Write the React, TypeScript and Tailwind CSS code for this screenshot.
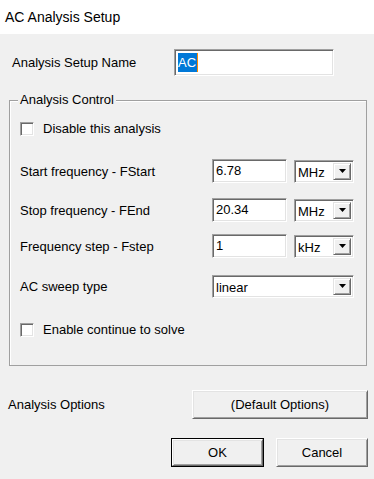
const font = { fontFamily: '"Liberation Sans", Arial, sans-serif' };

function Sunken({ className = "", children }: { className?: string; children?: React.ReactNode }) {
  return (
    <div
      className={`border border-t-[#a0a0a0] border-l-[#a0a0a0] border-r-white border-b-white shadow-[inset_1px_1px_0_#696969,inset_-1px_-1px_0_#e3e3e3] bg-white ${className}`}
    >
      {children}
    </div>
  );
}

function CheckBox({ label }: { label: string }) {
  return (
    <div className="flex items-center h-[15px]">
      <Sunken className="w-[14px] h-[14px]" />
      <span className="ml-[9px]">{label}</span>
    </div>
  );
}

function Arrow() {
  return (
    <div className="h-full w-[18px] bg-[#f0f0f0] border border-t-[#e3e3e3] border-l-[#e3e3e3] border-r-[#696969] border-b-[#696969] shadow-[inset_1px_1px_0_#ffffff,inset_-1px_-1px_0_#a0a0a0] flex items-center justify-center">
      <svg width="7" height="4" viewBox="0 0 7 4">
        <path d="M0 0h7L3.5 4z" fill="#000" />
      </svg>
    </div>
  );
}

function Combo({ value, className = "" }: { value: string; className?: string }) {
  return (
    <Sunken className={`h-[23px] flex items-stretch p-[2px] ${className}`}>
      <span className="flex-1 pl-[1px] leading-[19px]">{value}</span>
      <Arrow />
    </Sunken>
  );
}

function Row({ label, value, unit, className = "" }: { label: string; value: string; unit: string; className?: string }) {
  return (
    <div className={`flex items-center h-[24px] ${className}`}>
      <span className="w-[192px] pt-[1px]">{label}</span>
      <Sunken className="w-[75px] h-[24px] pl-[3px] leading-[22px]">{value}</Sunken>
      <Combo value={unit} className="ml-[7px] w-[60px]" />
    </div>
  );
}

function Button({ label, className = "", isDefault = false }: { label: string; className?: string; isDefault?: boolean }) {
  const inner = (
    <div className="h-full w-full bg-[#f0f0f0] border border-t-white border-l-white border-r-[#696969] border-b-[#696969] shadow-[inset_1px_1px_0_#e3e3e3,inset_-1px_-1px_0_#a0a0a0] flex items-center justify-center">
      {label}
    </div>
  );
  return isDefault ? (
    <div className={`h-[29px] border border-black ${className}`}>{inner}</div>
  ) : (
    <div className={`h-[29px] ${className}`}>{inner}</div>
  );
}

export default function App() {
  return (
    <div className="w-[374px] h-[479px] flex flex-col bg-[#f0f0f0] text-[13px] text-black" style={font}>
      <div className="h-[34px] bg-white flex items-center pl-[5px] text-[14px]">AC Analysis Setup</div>

      <div className="flex items-center mt-[15px] h-[27px]">
        <span className="w-[174px] pl-[12px]">Analysis Setup Name</span>
        <Sunken className="w-[160px] h-[27px] flex items-center pl-[3px]">
          <span className="bg-[#0078d7] text-white leading-[19px] pr-[1px]">AC</span>
          <span className="w-[1px] h-[19px] bg-[#ff8a00]" />
        </Sunken>
      </div>

      <div className="relative ml-[9px] mt-[24px] w-[358px] h-[266px] border border-[#a0a0a0] shadow-[inset_1px_1px_0_#ffffff] px-[10px] pt-[20px]">
        <span className="absolute left-[8px] -top-[9px] bg-[#f0f0f0] px-[2px] leading-[16px]">Analysis Control</span>
        <CheckBox label="Disable this analysis" />
        <Row label="Start frequency - FStart" value="6.78" unit="MHz" className="mt-[23px]" />
        <Row label="Stop frequency - FEnd" value="20.34" unit="MHz" className="mt-[15px]" />
        <Row label="Frequency step - Fstep" value="1" unit="kHz" className="mt-[12px]" />
        <div className="flex items-center h-[24px] mt-[16px]">
          <span className="w-[192px] pt-[1px]">AC sweep type</span>
          <Combo value="linear" className="w-[142px]" />
        </div>
        <div className="mt-[24px]">
          <CheckBox label="Enable continue to solve" />
        </div>
      </div>

      <div className="flex items-center mt-[24px] h-[29px]">
        <span className="w-[192px] pl-[8px]">Analysis Options</span>
        <Button label="(Default Options)" className="w-[176px]" />
      </div>

      <div className="flex mt-[19px] pl-[171px]">
        <Button label="OK" isDefault className="w-[93px]" />
        <Button label="Cancel" className="w-[92px] ml-[12px]" />
      </div>
    </div>
  );
}
